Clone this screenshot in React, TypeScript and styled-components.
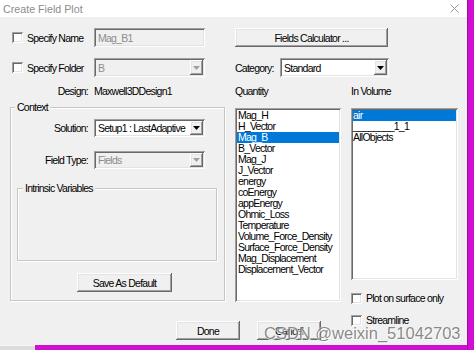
import React from 'react';
import styled, { createGlobalStyle } from 'styled-components';

const GlobalStyle = createGlobalStyle`
  html, body { margin: 0; padding: 0; background: #fff; }
  body {
    font-family: "Liberation Sans", Arial, sans-serif;
    font-size: 10.5px;
    letter-spacing: -0.75px;
    color: #000;
  }
  * { box-sizing: border-box; }
`;

const MAGENTA = '#d010d0';

const Screen = styled.div`
  position: relative;
  width: 474px;
  height: 350px;
  display: flex;
  overflow: hidden;
`;

const Window = styled.div`
  width: 467px;
  display: flex;
  flex-direction: column;
`;

const EdgeRight = styled.div`
  width: 7px;
  background: ${MAGENTA};
  border-left: 1px solid #a50aa5;
`;

const TitleBar = styled.div`
  height: 17px;
  background: #fff;
  display: flex;
  align-items: center;
  justify-content: space-between;
  padding: 0 8px 0 3px;
  font-family: "Liberation Sans", Arial, sans-serif;
  font-size: 10.7px;
  letter-spacing: 0;
  color: #8c8c8c;
`;

const Body = styled.div`
  height: 328px;
  background: #f0f0f0;
  padding: 11px 9px 0 10px;
  display: grid;
  grid-template-columns: 215px 106px 107px;
  column-gap: 10px;
  grid-template-rows: 29px 28px 16px auto auto;
  align-items: start;
`;

const BottomStrip = styled.div`
  height: 5px;
  display: flex;
`;
const BottomLeft = styled.div`
  width: 35px;
  background: #dcdcdc;
  border-top: 1px solid #f6f6f6;
`;
const BottomMagenta = styled.div`
  flex: 1;
  background: ${MAGENTA};
`;

const sunken = `
  box-shadow: inset 1px 1px #a0a0a0, inset -1px -1px #fff,
    inset 2px 2px #696969, inset -2px -2px #e3e3e3;
`;
const raised = `
  box-shadow: inset -1px -1px #696969, inset 1px 1px #fff,
    inset -2px -2px #a0a0a0, inset 2px 2px #e3e3e3;
`;

const FieldRow = styled.div<{ $label?: number; $mt?: number }>`
  display: grid;
  grid-template-columns: ${(p) => p.$label ?? 78}px 111px;
  column-gap: 6px;
  align-items: center;
  margin-top: ${(p) => p.$mt ?? 0}px;
`;

const RightLabel = styled.span`
  text-align: right;
  line-height: 12px;
  white-space: nowrap;
`;

const Value = styled.span`
  line-height: 12px;
  white-space: nowrap;
`;

const CheckLine = styled.label<{ $mt?: number; $pl?: number }>`
  display: flex;
  align-items: center;
  gap: 4px;
  padding-left: ${(p) => p.$pl ?? 0}px;
  margin-top: ${(p) => p.$mt ?? 0}px;
  white-space: nowrap;
  line-height: 12px;
`;

const Box = styled.span`
  width: 11px;
  height: 11px;
  background: #fff;
  flex: none;
  ${sunken}
`;

const TextBox = styled.div<{ $disabled?: boolean; $h?: number }>`
  height: ${(p) => p.$h ?? 19}px;
  background: ${(p) => (p.$disabled ? '#f0f0f0' : '#fff')};
  color: ${(p) => (p.$disabled ? '#8d8d8d' : '#000')};
  padding: 0 4px;
  display: flex;
  align-items: center;
  ${sunken}
`;

const Combo = styled.div<{ $disabled?: boolean; $h?: number; $w?: number }>`
  height: ${(p) => p.$h ?? 18}px;
  width: ${(p) => (p.$w ? `${p.$w}px` : 'auto')};
  background: ${(p) => (p.$disabled ? '#f0f0f0' : '#fff')};
  color: ${(p) => (p.$disabled ? '#8d8d8d' : '#000')};
  padding: 2px 2px 2px 4px;
  display: flex;
  align-items: center;
  justify-content: space-between;
  white-space: nowrap;
  ${sunken}
`;

const ArrowButton = styled.span`
  width: 13px;
  align-self: stretch;
  background: #f0f0f0;
  display: flex;
  align-items: center;
  justify-content: center;
  flex: none;
  ${raised}
`;

const Button = styled.div<{ $w: number; $ml?: number; $mt?: number }>`
  width: ${(p) => p.$w}px;
  height: 19px;
  margin-left: ${(p) => p.$ml ?? 0}px;
  margin-top: ${(p) => p.$mt ?? 0}px;
  background: #f0f0f0;
  display: flex;
  align-items: center;
  justify-content: center;
  white-space: nowrap;
  ${raised}
`;

const Group = styled.fieldset<{ $h: number; $w?: number; $ml?: number; $mt?: number }>`
  margin: ${(p) => p.$mt ?? 0}px 0 0 ${(p) => p.$ml ?? 0}px;
  padding: 0;
  height: ${(p) => p.$h}px;
  width: ${(p) => (p.$w ? `${p.$w}px` : 'auto')};
  min-width: 0;
  border: 1px solid #c6c6c6;
  box-shadow: inset 1px 1px #fff, 1px 1px #fff;
`;

const Legend = styled.legend<{ $ml: number }>`
  margin-left: ${(p) => p.$ml}px;
  padding: 0 2px;
  line-height: 12px;
  background: #f0f0f0;
`;

const Cell = styled.div<{ $col: string; $row: string }>`
  grid-column: ${(p) => p.$col};
  grid-row: ${(p) => p.$row};
  min-width: 0;
`;

const PlainLabel = styled.div`
  line-height: 12px;
  white-space: nowrap;
`;

const CategoryRow = styled.div`
  display: flex;
  align-items: center;
  margin-top: 1px;
`;

const CategoryLabel = styled.span`
  width: 45px;
  line-height: 12px;
`;

const List = styled.div<{ $h: number }>`
  margin-top: 7px;
  height: ${(p) => p.$h}px;
  background: #fff;
  padding: 2px;
  overflow: hidden;
  ${sunken}
`;

const Item = styled.div<{ $sel?: boolean; $pl?: number }>`
  height: 11px;
  line-height: 11px;
  padding-left: ${(p) => p.$pl ?? 1}px;
  white-space: nowrap;
  background: ${(p) => (p.$sel ? '#0078d7' : 'transparent')};
  color: ${(p) => (p.$sel ? '#fff' : '#000')};
`;

const Footer = styled.div`
  grid-column: 1 / 3;
  grid-row: 5;
  display: flex;
  justify-content: flex-end;
  gap: 17px;
  padding-right: 20px;
  margin-top: 14px;
`;

const Watermark = styled.div`
  position: absolute;
  left: 264px;
  top: 325px;
  font-family: "Liberation Sans", Arial, sans-serif;
  font-size: 16.5px;
  letter-spacing: 0;
  line-height: 1;
  color: rgba(105, 105, 105, 0.78);
  text-shadow: 1px 1px 0 rgba(255, 255, 255, 0.85), -1px 0 0 rgba(255, 255, 255, 0.5);
  white-space: nowrap;
  pointer-events: none;
`;

const Arrow = ({ disabled }: { disabled?: boolean }) => (
  <svg width="7" height="4" viewBox="0 0 7 4">
    <path d="M0 0H7L3.5 4Z" fill={disabled ? '#a0a0a0' : '#000'} />
  </svg>
);

const CloseIcon = () => (
  <svg width="9" height="9" viewBox="0 0 9 9">
    <path d="M0.5 0.5L8.5 8.5M8.5 0.5L0.5 8.5" stroke="#9a9a9a" strokeWidth="1" />
  </svg>
);

const quantities = [
  'Mag_H',
  'H_Vector',
  'Mag_B',
  'B_Vector',
  'Mag_J',
  'J_Vector',
  'energy',
  'coEnergy',
  'appEnergy',
  'Ohmic_Loss',
  'Temperature',
  'Volume_Force_Density',
  'Surface_Force_Density',
  'Mag_Displacement',
  'Displacement_Vector',
];

const volumes = ['air', '________1_1', 'AllObjects'];

export default function App() {
  return (
    <>
      <GlobalStyle />
      <Screen>
        <Window>
          <TitleBar>
            <span>Create Field Plot</span>
            <CloseIcon />
          </TitleBar>
          <Body>
            <Cell $col="1" $row="1">
              <FieldRow>
                <CheckLine $pl={2}>
                  <Box />
                  Specify Name
                </CheckLine>
                <TextBox $disabled>Mag_B1</TextBox>
              </FieldRow>
            </Cell>
            <Cell $col="2 / 4" $row="1">
              <Button $w={153}>Fields Calculator ...</Button>
            </Cell>

            <Cell $col="1" $row="2">
              <FieldRow $mt={1}>
                <CheckLine $pl={2}>
                  <Box />
                  Specify Folder
                </CheckLine>
                <Combo $disabled $h={19}>
                  <span>B</span>
                  <ArrowButton>
                    <Arrow disabled />
                  </ArrowButton>
                </Combo>
              </FieldRow>
            </Cell>
            <Cell $col="2 / 4" $row="2">
              <CategoryRow>
                <CategoryLabel>Category:</CategoryLabel>
                <Combo $h={19} $w={109}>
                  <span>Standard</span>
                  <ArrowButton>
                    <Arrow />
                  </ArrowButton>
                </Combo>
              </CategoryRow>
            </Cell>

            <Cell $col="1" $row="3">
              <FieldRow>
                <RightLabel>Design:</RightLabel>
                <Value>Maxwell3DDesign1</Value>
              </FieldRow>
            </Cell>
            <Cell $col="2" $row="3">
              <PlainLabel>Quantity</PlainLabel>
            </Cell>
            <Cell $col="3" $row="3">
              <PlainLabel>In Volume</PlainLabel>
            </Cell>

            <Cell $col="1" $row="4">
              <Group $h={200}>
                <Legend $ml={4}>Context</Legend>
                <FieldRow $label={77} $mt={6}>
                  <RightLabel>Solution:</RightLabel>
                  <Combo>
                    <span>Setup1 : LastAdaptive</span>
                    <ArrowButton>
                      <Arrow />
                    </ArrowButton>
                  </Combo>
                </FieldRow>
                <FieldRow $label={77} $mt={14}>
                  <RightLabel>Field Type:</RightLabel>
                  <Combo $disabled>
                    <span>Fields</span>
                    <ArrowButton>
                      <Arrow disabled />
                    </ArrowButton>
                  </Combo>
                </FieldRow>
                <Group $h={79} $w={200} $ml={6} $mt={13}>
                  <Legend $ml={5}>Intrinsic Variables</Legend>
                </Group>
                <Button $w={95} $ml={66} $mt={12}>
                  Save As Default
                </Button>
              </Group>
            </Cell>
            <Cell $col="2" $row="4">
              <List $h={194}>
                {quantities.map((q) => (
                  <Item key={q} $sel={q === 'Mag_B'}>
                    {q}
                  </Item>
                ))}
              </List>
            </Cell>
            <Cell $col="3" $row="4 / 6">
              <List $h={172}>
                {volumes.map((v) => (
                  <Item key={v} $sel={v === 'air'} $pl={0}>
                    {v}
                  </Item>
                ))}
              </List>
              <CheckLine $mt={12}>
                <Box />
                Plot on surface only
              </CheckLine>
              <CheckLine $mt={10}>
                <Box />
                Streamline
              </CheckLine>
            </Cell>

            <Footer>
              <Button $w={64}>Done</Button>
              <Button $w={64}>Cancel</Button>
            </Footer>
          </Body>
          <BottomStrip>
            <BottomLeft />
            <BottomMagenta />
          </BottomStrip>
        </Window>
        <EdgeRight />
        <Watermark>CSDN @weixin_51042703</Watermark>
      </Screen>
    </>
  );
}
